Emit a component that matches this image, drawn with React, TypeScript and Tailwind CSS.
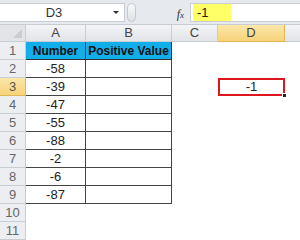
const font = "font-['Liberation_Sans',Arial,sans-serif]"

const columns = ["A", "B", "C", "D", ""]
const numbers = [-58, -39, -47, -55, -88, -2, -6, -87]
const rowCount = 11

function ColumnHeader({ label, active }: { label: string; active?: boolean }) {
	return (
		<div
			className={
				active
					? "flex items-center justify-center border-r border-b border-[#e0b85a] bg-gradient-to-b from-[#fbe7a8] to-[#f7d27a] text-[13px] text-[#444]"
					: "flex items-center justify-center border-r border-b border-[#c8cdd3] bg-gradient-to-b from-[#f3f4f6] to-[#e2e4e8] text-[13px] text-[#444]"
			}>
			{label}
		</div>
	)
}

function RowHeader({ n, active }: { n: number; active?: boolean }) {
	return (
		<div
			className={
				active
					? "flex items-center justify-center border-r border-b border-[#e0b85a] bg-gradient-to-b from-[#fbe7a8] to-[#f7d27a] text-[13px] text-[#555]"
					: "flex items-center justify-center border-r border-b border-[#c8cdd3] bg-[#eceef1] text-[13px] text-[#666]"
			}>
			{n}
		</div>
	)
}

export default function App() {
	return (
		<div className={`${font} w-[300px] h-[240px] overflow-hidden bg-white flex flex-col`}>
			{/* formula bar */}
			<div className="h-[25px] bg-[#e6e9ed] flex items-start pt-[3px] border-b border-[#c8cdd3]">
				<div className="w-[125px] h-[19px] bg-white border-y border-r border-[#c8cdd3] flex items-center relative">
					<span className="flex-1 text-center text-[13px] text-[#333] pr-[16px]">D3</span>
					<div className="absolute right-[5px] top-[7px] w-0 h-0 border-x-[3px] border-x-transparent border-t-[3px] border-t-[#333]" />
				</div>
				<div className="w-[9px] h-[19px] ml-[2px] rounded-full border border-[#c4c8cd] bg-gradient-to-b from-[#f8f9fa] to-[#dfe2e6]" />
				<div className="flex-1" />
				<span className="text-[12px] italic font-['Liberation_Serif',serif] text-[#333] mr-[6px] mt-[2px]">
					f<span className="text-[9px]">x</span>
				</span>
				<div className="w-[110px] h-[19px] bg-white border-y border-l border-[#c8cdd3] flex items-center">
					<div className="w-[38px] ml-[2px] h-full bg-[#ffff66] flex items-center pl-[4px] text-[13px] text-[#222]">-1</div>
				</div>
			</div>

			{/* sheet */}
			<div className="w-[360px] grid grid-cols-[26px_60px_86px_46px_67px_75px] grid-rows-[17px_repeat(11,18px)]">
				<div className="border-r border-b border-[#c8cdd3] bg-[#e2e4e8] relative">
					<div className="absolute right-[3px] bottom-[3px] w-0 h-0 border-l-[9px] border-l-transparent border-b-[9px] border-b-[#c9ccd1]" />
				</div>
				{columns.map((c, i) => (
					<ColumnHeader active={c === "D"} key={i} label={c} />
				))}

				{Array.from({ length: rowCount }, (_, i) => {
					const row = i + 1
					return [
						<RowHeader active={row === 3} key={`h${row}`} n={row} />,
						row === 1 ? (
							<div
								className="flex items-center justify-center bg-[#12aeea] border-r border-b border-[#333] font-bold text-[12px] text-[#111]"
								key={`a${row}`}>
								Number
							</div>
						) : row <= 9 ? (
							<div
								className="flex items-center justify-center border-r border-b border-[#444] text-[13px] text-[#222]"
								key={`a${row}`}>
								{numbers[row - 2]}
							</div>
						) : (
							<div key={`a${row}`} />
						),
						row === 1 ? (
							<div
								className="flex items-center justify-center bg-[#12aeea] border-r border-b border-[#333] font-bold text-[12px] text-[#111] whitespace-nowrap"
								key={`b${row}`}>
								Positive Value
							</div>
						) : row <= 9 ? (
							<div className="border-r border-b border-[#444]" key={`b${row}`} />
						) : (
							<div key={`b${row}`} />
						),
						<div key={`c${row}`} />,
						row === 3 ? (
							<div
								className="relative flex items-center justify-center border-2 border-[#e0161e] text-[13px] text-[#222]"
								key={`d${row}`}>
								-1
								<div className="absolute right-[-4px] bottom-[-4px] w-[5px] h-[5px] bg-[#222] border border-white" />
							</div>
						) : (
							<div key={`d${row}`} />
						),
						<div key={`e${row}`} />,
					]
				})}
			</div>
		</div>
	)
}
